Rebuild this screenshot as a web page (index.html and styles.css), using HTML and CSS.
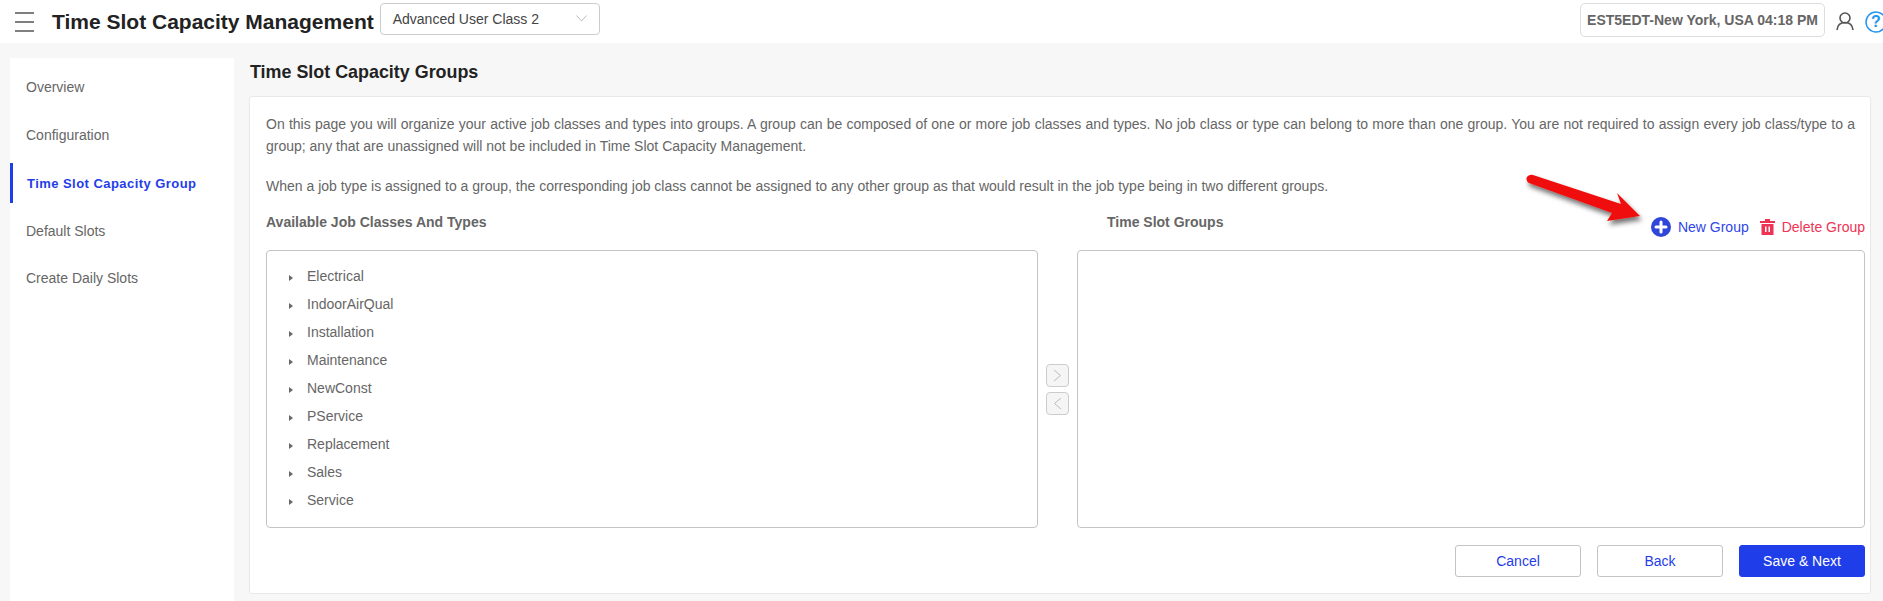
FILE: index.html
```html
<!DOCTYPE html>
<html lang="en">
<head>
<meta charset="utf-8">
<title>Time Slot Capacity Management</title>
<link rel="stylesheet" href="styles.css">
</head>
<body>
<header class="topbar">
  <svg class="menu-icon" width="19" height="20" viewBox="0 0 19 20"><path d="M0 1h19M0 10h19M0 19h19" stroke="#555" stroke-width="1.6" fill="none"/></svg>
  <h1 class="app-title">Time Slot Capacity Management</h1>
  <div class="class-select">
    <span>Advanced User Class 2</span>
    <svg width="11" height="7" viewBox="0 0 11 7"><path d="M.5.5l5 5.5 5-5.5" stroke="#bbb" fill="none"/></svg>
  </div>
  <div class="topbar-right">
    <div class="tz-box">EST5EDT-New York, USA 04:18 PM</div>
    <svg class="user-icon" width="20" height="20" viewBox="0 0 20 20"><circle cx="10" cy="7" r="5" stroke="#555" stroke-width="1.6" fill="none"/><path d="M2 19c.5-5 3.500-7.500 8-7.500s7.500 2.500 8 7.500" stroke="#555" stroke-width="1.6" fill="none"/></svg>
    <svg class="help-icon" width="22" height="22" viewBox="0 0 22 22"><circle cx="11" cy="11" r="10" stroke="#2196f3" stroke-width="1.5" fill="none"/><text x="11" y="16" text-anchor="middle" class="help-text">?</text></svg>
  </div>
</header>
<div class="page">
  <nav class="sidebar">
    <a class="nav-item">Overview</a>
    <a class="nav-item">Configuration</a>
    <a class="nav-item active">Time Slot Capacity Group</a>
    <a class="nav-item">Default Slots</a>
    <a class="nav-item last">Create Daily Slots</a>
  </nav>
  <main class="main">
    <h2 class="section-title">Time Slot Capacity Groups</h2>
    <section class="card">
      <p class="intro first">On this page you will organize your active job classes and types into groups. A group can be composed of one or more job classes and types. No job class or type can belong to more than one group. You are not required to assign every job class/type to a group; any that are unassigned will not be included in Time Slot Capacity Management.</p>
      <p class="intro second">When a job type is assigned to a group, the corresponding job class cannot be assigned to any other group as that would result in the job type being in two different groups.</p>
      <div class="columns-head">
        <h3 class="col-title left-title">Available Job Classes And Types</h3>
        <h3 class="col-title right-title">Time Slot Groups</h3>
        <div class="actions">
          <a class="action new">
            <svg width="20" height="20" viewBox="0 0 20 20"><circle cx="10" cy="10" r="10" fill="#2f46d8"/><path d="M10 5v10M5 10h10" stroke="#fff" stroke-width="3" stroke-linecap="round"/></svg>
            New Group
          </a>
          <a class="action del">
            <svg width="15" height="16" viewBox="0 0 15 16"><path d="M5 0h5v2h5v2H0V2h5zM1.500 5h12v11h-12zM5 7.500v5.500h1.500V7.500zM8.500 7.500v5.500H10V7.500z" fill="#ee3355" fill-rule="evenodd"/></svg>
            Delete Group
          </a>
        </div>
        <svg class="arrow" width="122" height="60" viewBox="0 0 122 60">
          <defs><filter id="shadow" x="-20%" y="-40%" width="140%" height="200%"><feDropShadow dx="2" dy="4" stdDeviation="2.500" flood-color="#000" flood-opacity=".55"/></filter></defs>
          <path d="M5 4 Q1 5 1.500 8.500 Q2 11 4 12 L87 42 L82 50 L115 45 L92 22 L96 33 L8 4 Q6.500 3.500 5 4Z" fill="#f01010" filter="url(#shadow)"/>
        </svg>
      </div>
      <div class="columns">
        <ul class="panel tree">
          <li><i class="caret"></i>Electrical</li>
          <li><i class="caret"></i>IndoorAirQual</li>
          <li><i class="caret"></i>Installation</li>
          <li><i class="caret"></i>Maintenance</li>
          <li><i class="caret"></i>NewConst</li>
          <li><i class="caret"></i>PService</li>
          <li><i class="caret"></i>Replacement</li>
          <li><i class="caret"></i>Sales</li>
          <li><i class="caret"></i>Service</li>
        </ul>
        <div class="transfer">
          <button class="move"><svg width="9" height="13" viewBox="0 0 9 13"><path d="M1 1l6.500 5.500L1 12" stroke="#bbb" fill="none"/></svg></button>
          <button class="move"><svg width="9" height="13" viewBox="0 0 9 13"><path d="M8 1L1.500 6.500 8 12" stroke="#bbb" fill="none"/></svg></button>
        </div>
        <div class="panel groups"></div>
      </div>
      <footer class="footer">
        <button class="btn">Cancel</button>
        <button class="btn">Back</button>
        <button class="btn primary">Save &amp; Next</button>
      </footer>
    </section>
  </main>
</div>
</body>
</html>
```
FILE: styles.css
```css
* { box-sizing: border-box; }
html, body { margin: 0; height: 601px; overflow: hidden; }
body { background: #f7f7f7; font-family: "Liberation Sans", Arial, sans-serif; font-size: 14px; color: #666; }

.topbar { height: 43px; background: #fff; display: flex; align-items: center; padding-left: 15px; overflow: hidden; }
.menu-icon { flex: none; }
.app-title { margin: 0 0 0 18px; font-size: 21px; font-weight: 700; color: #222; white-space: nowrap; }
.class-select { margin-left: 6px; margin-bottom: 6px; width: 220px; height: 32px; border: 1px solid #ccc; border-radius: 4px; display: flex; align-items: center; justify-content: space-between; padding: 0 12px 0 12px; color: #444; }
.topbar-right { margin-left: auto; display: flex; align-items: center; margin-right: -4px; }
.tz-box { height: 34px; width: 245px; border: 1px solid #ddd; border-radius: 5px; display: flex; align-items: center; justify-content: center; font-weight: 700; font-size: 14px; white-space: nowrap; margin-bottom: 4px; }
.user-icon { margin-left: 10px; margin-top: -1px; }
.help-icon { margin-left: 10px; }
.help-text { font: 700 16px "Liberation Sans", Arial, sans-serif; fill: #2196f3; }

.page { display: flex; padding: 15px 0 0 10px; }
.sidebar { width: 224px; height: 543px; background: #fff; display: flex; flex-direction: column; padding-top: 5px; flex: none; }
.nav-item { height: 48px; display: flex; align-items: center; padding-left: 16px; color: #666; }
.nav-item.last { margin-top: -1px; }
.nav-item.active { border-left: 3px solid #1f3de8; padding-left: 14px; color: #1f3de8; font-weight: 700; height: 40px; margin: 4px 0; font-size: 13px; letter-spacing: .45px; }

.main { margin-left: 15px; width: 1622px; }
.section-title { margin: 5px 0 0 1px; height: 33px; font-size: 17.900px; font-weight: 700; color: #222; line-height: 19px; }
.card { background: #fff; border: 1px solid #e8e8e8; border-radius: 3px; height: 498px; padding: 16px 5px 0 16px; }
.intro { margin: 0; line-height: 22px; color: #666; font-size: 14px; }
.intro.first { width: 1589px; text-align: justify; }
.intro.second { margin-top: 18px; }
.columns-head { position: relative; height: 47px; margin-top: 6px; }
.col-title { margin: 0; position: absolute; top: 10px; font-size: 14px; font-weight: 700; color: #666; line-height: 18px; }
.left-title { left: 0; }
.right-title { left: 841px; }
.actions { position: absolute; right: 0; top: 14px; display: flex; gap: 11px; }
.action { display: flex; align-items: center; gap: 7px; font-size: 14px; }
.action.new { color: #2f46e8; }
.action.del { color: #ee3355; }
.arrow { position: absolute; left: 1259px; top: -32px; }

.columns { display: flex; height: 278px; }
.panel { border: 1px solid #c4c4c4; border-radius: 4px; height: 278px; margin: 0; }
.tree { width: 772px; list-style: none; padding: 11px 0 0 22px; }
.tree li { height: 28px; display: flex; align-items: center; color: #666; }
.caret { width: 0; height: 0; border-left: 4px solid #666; border-top: 3px solid transparent; border-bottom: 3px solid transparent; margin: 3px 14px 0 0; }
.transfer { width: 39px; display: flex; flex-direction: column; align-items: center; padding-top: 114px; gap: 5px; }
.move { width: 23px; height: 23px; padding: 0; background: #f5f5f5; border: 1px solid #ccc; border-radius: 4px; display: flex; align-items: center; justify-content: center; }
.groups { width: 788px; }

.footer { display: flex; justify-content: flex-end; gap: 16px; margin-top: 17px; }
.btn { width: 126px; height: 32px; border: 1px solid #c4c4c4; border-radius: 3px; background: #fff; color: #1f3de8; font: 14px "Liberation Sans", Arial, sans-serif; }
.btn.primary { background: #1f3de8; border-color: #1f3de8; color: #fff; }
```
